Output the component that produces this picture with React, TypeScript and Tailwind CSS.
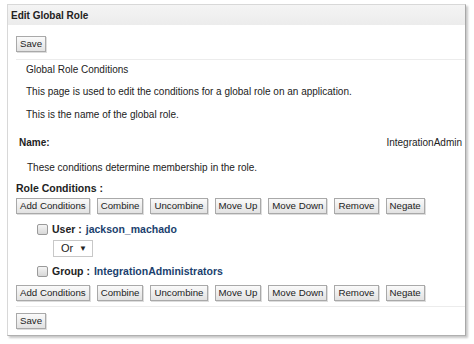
import React from 'react';

const btn =
  'h-[16px] whitespace-nowrap border border-[#a9a9a9] bg-gradient-to-b from-[#fafafa] to-[#e2e2e2] px-[3px] text-[9.7px] leading-[14px] text-[#222] font-["Liberation_Sans",Arial,sans-serif] shadow-[1px_1px_0_#ddd]';

function ButtonRow() {
  const labels = ['Add Conditions', 'Combine', 'Uncombine', 'Move Up', 'Move Down', 'Remove', 'Negate'];
  return (
    <div className="flex gap-[7px]">
      {labels.map((l) => (
        <button key={l} className={btn}>
          {l}
        </button>
      ))}
    </div>
  );
}

function Check() {
  return (
    <span className="inline-block h-[11px] w-[11px] rounded-[2px] border border-[#9a9a9a] bg-gradient-to-b from-[#f4f4f4] to-[#d8d8d8]" />
  );
}

export default function App() {
  return (
    <div className="h-[344px] w-[474px] bg-white pl-[7px] pt-[4px] font-['Liberation_Sans',Arial,sans-serif] text-[10px] text-[#222]">
      <div className="h-[332px] w-[459px] border border-[#d8d8d8] border-r-[#a8a8a8] border-b-[#b0b0b0] shadow-[2px_2px_2px_#c8c8c8]">
        <div className="flex h-[20px] items-center bg-gradient-to-b from-[#f4f4f4] to-[#ececec] pl-[3px] text-[10px] font-bold text-[#222]">
          Edit Global Role
        </div>
        <div className="pl-[8px] pt-[11px]">
          <button className={btn}>Save</button>
        </div>
        <div className="ml-[8px] mt-[7px] border-t border-[#ececec]" />
        <div className="pl-[18px] pt-[3px]">
          <div className="h-[22px] leading-[14px]">Global Role Conditions</div>
          <div className="h-[23px] leading-[14px]">
            This page is used to edit the conditions for a global role on an application.
          </div>
          <div className="leading-[14px]">This is the name of the global role.</div>
        </div>
        <div className="flex justify-between pl-[11px] pr-[3px] pt-[14px] leading-[14px]">
          <span className="font-bold">Name:</span>
          <span>IntegrationAdmin</span>
        </div>
        <div className="pl-[19px] pt-[11px] leading-[14px]">These conditions determine membership in the role.</div>
        <div className="pl-[8px] pt-[6px]">
          <div className="text-[10.5px] font-bold leading-[14px]">Role Conditions :</div>
          <div className="pt-[3px]">
            <ButtonRow />
          </div>
          <div className="flex items-center gap-[4px] pl-[21px] pt-[8px] text-[10.5px] leading-[14px]">
            <Check />
            <span className="font-bold">User :</span>
            <span className="font-bold text-[#1b3f6e]">jackson_machado</span>
          </div>
          <div className="pl-[37px] pt-[4px]">
            <div className="flex h-[17px] w-[40px] items-center justify-between border border-[#c8c8c8] bg-white pl-[7px] pr-[5px] text-[11px]">
              <span>Or</span>
              <span className="text-[8px]">▼</span>
            </div>
          </div>
          <div className="flex items-center gap-[4px] pl-[21px] pt-[7px] text-[10.5px] leading-[14px]">
            <Check />
            <span className="font-bold">Group :</span>
            <span className="font-bold text-[#1b3f6e]">IntegrationAdministrators</span>
          </div>
          <div className="pt-[7px]">
            <ButtonRow />
          </div>
          <div className="mt-[5px] border-t border-[#ececec]" />
          <div className="pt-[6px]">
            <button className={btn}>Save</button>
          </div>
        </div>
      </div>
    </div>
  );
}
